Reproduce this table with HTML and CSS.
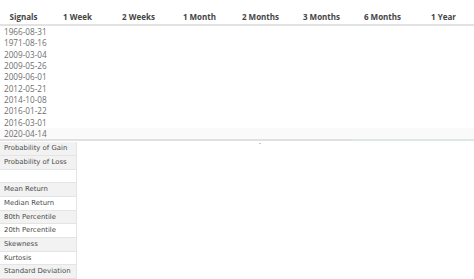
FILE: index.html
```html
<!DOCTYPE html>
<html>
<head>
<meta charset="utf-8">
<link rel="stylesheet" href="styles.css">
</head>
<body>
<table class="signals">
  <thead>
    <tr>
      <th class="c0">Signals</th><th>1 Week</th><th>2 Weeks</th><th>1 Month</th><th>2 Months</th><th>3 Months</th><th>6 Months</th><th>1 Year</th>
    </tr>
  </thead>
  <tbody>
    <tr><td>1966-08-31</td><td></td><td></td><td></td><td></td><td></td><td></td><td></td></tr>
    <tr><td>1971-08-16</td><td></td><td></td><td></td><td></td><td></td><td></td><td></td></tr>
    <tr><td>2009-03-04</td><td></td><td></td><td></td><td></td><td></td><td></td><td></td></tr>
    <tr><td>2009-05-26</td><td></td><td></td><td></td><td></td><td></td><td></td><td></td></tr>
    <tr><td>2009-06-01</td><td></td><td></td><td></td><td></td><td></td><td></td><td></td></tr>
    <tr><td>2012-05-21</td><td></td><td></td><td></td><td></td><td></td><td></td><td></td></tr>
    <tr><td>2014-10-08</td><td></td><td></td><td></td><td></td><td></td><td></td><td></td></tr>
    <tr><td>2016-01-22</td><td></td><td></td><td></td><td></td><td></td><td></td><td></td></tr>
    <tr><td>2016-03-01</td><td></td><td></td><td></td><td></td><td></td><td></td><td></td></tr>
    <tr class="last"><td>2020-04-14</td><td></td><td></td><td></td><td></td><td></td><td></td><td></td></tr>
  </tbody>
</table>
<div class="divider"><span class="seg-gray"></span><span class="seg-green"></span></div>
<div class="stats">
  <div class="labels">
    <div class="row alt">Probability of Gain</div>
    <div class="row alt">Probability of Loss</div>
    <div class="row"></div>
    <div class="row alt">Mean Return</div>
    <div class="row">Median Return</div>
    <div class="row alt">80th Percentile</div>
    <div class="row">20th Percentile</div>
    <div class="row alt">Skewness</div>
    <div class="row">Kurtosis</div>
    <div class="row alt">Standard Deviation</div>
  </div>
  <div class="stats-body"><span class="dot"></span></div>
</div>
</body>
</html>
```
FILE: styles.css
```css
html, body {
  margin: 0;
  padding: 0;
  background: #fff;
}
.signals {
  width: 474px;
  border-collapse: collapse;
  table-layout: fixed;
  font-family: "Open Sans", sans-serif;
}
.signals th {
  font-size: 8px;
  font-weight: 700;
  color: #444;
  height: 25px;
  box-sizing: border-box;
  padding: 8px 0 0 0;
  text-align: center;
  border-bottom: 2px solid #e2e2e2;
  width: 61px;
}
.signals th.c0 {
  width: 47px;
}
.signals td {
  font-size: 8.2px;
  color: #6e6e6e;
  height: 11.33px;
  padding: 0 0 0 4px;
  line-height: 11.33px;
  white-space: nowrap;
}
.signals tr.last td {
  background: #fafafa;
}
.divider {
  display: flex;
  height: 2px;
}
.seg-gray {
  width: 352px;
  background: #e0e0e0;
}
.seg-green {
  flex: 1;
  background: #dbe9e1;
}
.stats {
  display: flex;
  position: relative;
  padding-top: 1px;
}
.labels {
  width: 76px;
  border-right: 1px solid #e4e4e4;
}
.row {
  height: 12.67px;
  line-height: 12.67px;
  border-bottom: 1px solid #e4e4e4;
  font-family: "DejaVu Sans", Verdana, sans-serif;
  font-size: 6.9px;
  color: #4a4a4a;
  padding-left: 4px;
  white-space: nowrap;
}
.row.alt {
  background: #f2f2f2;
}
.stats-body {
  flex: 1;
  position: relative;
}
.dot {
  position: absolute;
  left: 182px;
  top: 1px;
  width: 2px;
  height: 1px;
  background: #c8c8c8;
}
```
